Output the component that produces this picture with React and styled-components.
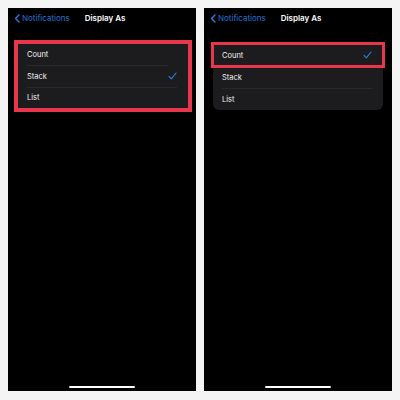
import React from 'react';
import styled, { createGlobalStyle } from 'styled-components';

const GlobalStyle = createGlobalStyle`
  body {
    margin: 0;
    background: #f4f4f4;
    font-family: Inter, 'Liberation Sans', sans-serif;
    -webkit-font-smoothing: antialiased;
  }
`;

const CheckIcon = () => (
  <svg width="9" height="8" viewBox="0 0 9 8">
    <path d="M1 4.4 L3.3 6.8 L8 1" fill="none" stroke="#2f7de1" strokeWidth="1.1" strokeLinecap="round" strokeLinejoin="round" />
  </svg>
);

const ChevronIcon = () => (
  <svg width="6" height="9" viewBox="0 0 6 9">
    <path d="M5 1 L1.5 4.5 L5 8" fill="none" stroke="#2f7de1" strokeWidth="1.4" strokeLinecap="round" strokeLinejoin="round" />
  </svg>
);

const options = ['Count', 'Stack', 'List'];

function Phone({ selected, boxed }) {
  return (
    <Screen>
      <Header>
        <Back>
          <ChevronIcon />
          Notifications
        </Back>
        <Title>Display As</Title>
        <span />
      </Header>
      <Frame boxed={boxed === 'list'}>
        <Group boxed={boxed === 'list'}>
          {options.map((o, i) => (
            <Row key={o} rowHeight={boxed === 'list' ? 21.4 : 22} highlight={boxed === o}>
              <Label first={i === 0}>{o}</Label>
              {selected === o && <CheckIcon />}
            </Row>
          ))}
        </Group>
      </Frame>
      <Spacer />
      <HomeBar />
    </Screen>
  );
}

export default function App() {
  return (
    <>
      <GlobalStyle />
      <Page>
        <Phone selected="Stack" boxed="list" />
        <Phone selected="Count" boxed="Count" />
      </Page>
    </>
  );
}

const Page = styled.div`
  width: 400px;
  height: 400px;
  box-sizing: border-box;
  padding: 8px 8px 9px 8px;
  display: grid;
  grid-template-columns: 188px 188px;
  gap: 8px;
`;

const Screen = styled.div`
  background: #000;
  display: flex;
  flex-direction: column;
  padding-bottom: 3px;
`;

const Header = styled.div`
  display: grid;
  grid-template-columns: 1fr auto 1fr;
  align-items: center;
  height: 20px;
  padding-left: 6px;
`;

const Back = styled.div`
  display: flex;
  align-items: center;
  gap: 2px;
  color: #2a72d4;
  font-size: 8px;
  white-space: nowrap;
`;

const Title = styled.div`
  color: #fff;
  font-size: 8px;
  font-weight: 600;
`;

const Frame = styled.div`
  margin: ${p => (p.boxed ? '12px 4px 0 6px' : '16px 9px 0 9px')};
  border: ${p => (p.boxed ? '4px solid #e8374c' : 'none')};
`;

const Group = styled.div`
  background: #1c1c1e;
  border-radius: ${p => (p.boxed ? '0' : '6px')};
`;

const Row = styled.div`
  height: ${p => p.rowHeight}px;
  display: flex;
  align-items: center;
  justify-content: space-between;
  padding: 0 11px 0 0;
  outline: ${p => (p.highlight ? '3px solid #e8374c' : 'none')};
  outline-offset: -1px;
  position: relative;
  z-index: ${p => (p.highlight ? 1 : 0)};
`;

const Label = styled.div`
  flex: 1;
  align-self: stretch;
  display: flex;
  align-items: center;
  margin-left: 9px;
  color: #f2f2f2;
  font-size: 7.5px;
  border-top: ${p => (p.first ? 'none' : '0.5px solid #29292c')};
`;

const Spacer = styled.div`
  flex: 1;
`;

const HomeBar = styled.div`
  align-self: center;
  width: 66px;
  height: 2.5px;
  border-radius: 2px;
  background: #fff;
`;
